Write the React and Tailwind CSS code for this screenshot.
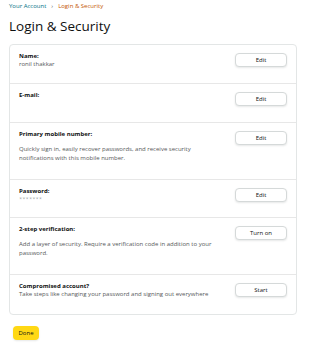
const rows = [
  { label: 'Name:', value: 'ronil thakkar', button: 'Edit', h: 'h-[39px]' },
  { label: 'E-mail:', value: '', button: 'Edit', h: 'h-[39px]' },
  {
    label: 'Primary mobile number:',
    desc: 'Quickly sign in, easily recover passwords, and receive security notifications with this mobile number.',
    button: 'Edit',
    h: 'h-[57px]',
  },
  { label: 'Password:', value: '*******', button: 'Edit', h: 'h-[38px]', thin: true },
  {
    label: '2-step verification:',
    desc: 'Add a layer of security. Require a verification code in addition to your password.',
    button: 'Turn on',
    h: 'h-[57px]',
  },
  {
    label: 'Compromised account?',
    value: 'Take steps like changing your password and signing out everywhere',
    button: 'Start',
    h: 'h-[39px]',
    last: true,
  },
]

function Row({ row }) {
  return (
    <div className={`flex ${row.h} gap-2 px-[9px] pt-[8px] ${row.last ? '' : 'border-b border-[#e7e7e7]'}`}>
      <div className="min-w-0 flex-1">
        <p className="text-[6px] font-bold leading-[7px] text-[#0f1111]">{row.label}</p>
        {row.value && (
          <p className={`text-[6px] leading-[8px] ${row.thin ? 'font-light text-[#8a8f8f]' : 'text-[#565959]'}`}>
            {row.value}
          </p>
        )}
        {row.desc && (
          <p className="mt-[7px] max-w-[206px] text-[6px] leading-[9px] text-[#565959]">{row.desc}</p>
        )}
      </div>
      <button
        type="button"
        className="h-[14px] w-[52px] shrink-0 rounded-[4px] border border-[#d5d9d9] bg-white text-[6px] text-[#0f1111] shadow-[0_1px_2px_rgba(213,217,217,0.6)]"
      >
        {row.button}
      </button>
    </div>
  )
}

export default function App() {
  return (
    <div className="min-h-[344px] w-[309px] bg-white px-[9px] pt-[3px] font-['Open_Sans',sans-serif]">
      <nav className="flex items-center gap-[5px] text-[6px] leading-[7px]">
        <span className="text-[#007185]">Your Account</span>
        <span className="text-[#565959]">›</span>
        <span className="text-[#c45500]">Login &amp; Security</span>
      </nav>
      <h1 className="mt-[7px] text-[13.5px] leading-[18px] text-[#0f1111]">Login &amp; Security</h1>
      <div className="mt-[9px] w-[288px] overflow-hidden rounded-[4px] border border-[#e3e6e6]">
        {rows.map((row) => (
          <Row key={row.label} row={row} />
        ))}
      </div>
      <button
        type="button"
        className="ml-[4px] mt-[11px] h-[14px] w-[26px] rounded-[4px] bg-[#ffd814] text-[6px] text-[#0f1111] shadow-[0_1px_2px_rgba(213,217,217,0.6)]"
      >
        Done
      </button>
    </div>
  )
}
